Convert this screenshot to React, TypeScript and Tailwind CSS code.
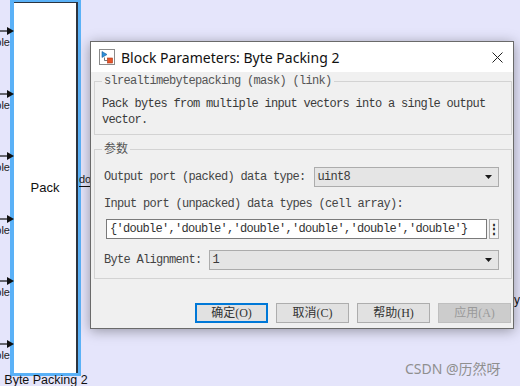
import React from 'react';

const mono = "font-['Liberation_Mono','Noto_Sans_CJK_SC',monospace] text-[12px] tracking-[-0.7px]";
const cjk = "font-['Liberation_Serif','Noto_Sans_CJK_SC',serif] text-[12px]";

const arrowRows = [31, 93.5, 156, 218.5, 281, 343.5];

function Dropdown({ value, className }: { value: string; className?: string }) {
  return (
    <div
      className={`flex h-[20px] items-center justify-between border border-[#acacac] bg-[#e5e5e5] pl-[3px] pr-[6px] ${className ?? ''}`}
    >
      <span className={`${mono} leading-[16px] text-[#3a3a3a]`}>{value}</span>
      <svg width="7" height="4" viewBox="0 0 7 4">
        <path d="M0 0h7L3.5 4z" fill="#1a1a1a" />
      </svg>
    </div>
  );
}

function DlgButton({
  label,
  primary,
  disabled,
}: {
  label: string;
  primary?: boolean;
  disabled?: boolean;
}) {
  return (
    <button
      className={`flex h-[20px] w-[73px] items-center justify-center ${cjk} ${
        primary
          ? 'border-2 border-[#0078d7] bg-[#e1e1e1] text-[#333]'
          : disabled
            ? 'border border-[#bfbfbf] bg-[#cccccc] text-[#9a9a9a]'
            : 'border border-[#adadad] bg-[#e1e1e1] text-[#333]'
      }`}
    >
      {label}
    </button>
  );
}

export default function App() {
  return (
    <div className="relative h-[386px] w-[520px] overflow-hidden bg-[#e5e5fb] font-['Liberation_Sans',sans-serif]">
      {/* Simulink block */}
      <div className="absolute left-[10px] top-0 h-[376px] w-[71px] bg-[#5ab1f7] pl-[4px] pr-[3px] pt-[2px] pb-[3px]">
        <div className="flex h-full items-center justify-center border-t border-r-2 border-[#2b3440] bg-white">
          <span className="text-[13px] text-[#111]">Pack</span>
        </div>
      </div>

      {arrowRows.map((y) => (
        <div key={y} className="absolute left-0" style={{ top: y - 5 }}>
          <svg width="14" height="10" viewBox="0 0 14 10">
            <path d="M0 5h8" stroke="#111" strokeWidth="1.2" />
            <path d="M7 1l7 4-7 4z" fill="#111" />
          </svg>
          <span className="absolute left-[-27px] top-[10px] w-[37px] text-right text-[11px] leading-[12px] text-[#222]">
            double
          </span>
        </div>
      ))}

      {/* output port */}
      <div className="absolute left-[79px] top-[172px] w-[14px] border-b border-[#111] text-[11px] leading-[14px] text-[#222]">
        do
      </div>
      <div className="absolute left-[514px] top-[293px] text-[12px] leading-[14px] text-[#111]">yt</div>

      <div className="absolute left-[0px] top-[372px] w-[92px] text-center text-[12.5px] leading-[16px] text-[#111]">
        Byte Packing 2
      </div>

      {/* Dialog */}
      <div className="absolute left-[90px] top-[41px] flex h-[288px] w-[424px] flex-col border border-[#6a6a6a] bg-[#f0f0f0] shadow-[0_2px_12px_rgba(0,0,0,0.35)]">
        <div className="flex h-[30px] items-center bg-white pl-[8px] pr-[10px]">
          <svg width="16" height="16" viewBox="0 0 16 16">
            <rect x="0.5" y="0.5" width="15" height="15" fill="#fff" stroke="#8a8a8a" />
            <path d="M3 2.5l5 3-5 3z" fill="#2d8fd8" stroke="#1a5f9a" strokeWidth="0.6" />
            <path d="M5.5 8.5v3h3" stroke="#555" fill="none" strokeWidth="0.8" />
            <rect x="8.5" y="9" width="5" height="5" fill="#e8542a" stroke="#a83212" strokeWidth="0.6" />
          </svg>
          <span className="ml-[6px] font-['Noto_Sans',sans-serif] text-[14px] text-[#111]">
            Block Parameters: Byte Packing 2
          </span>
          <svg className="ml-auto" width="11" height="11" viewBox="0 0 11 11">
            <path d="M0.5 0.5l10 10M10.5 0.5l-10 10" stroke="#222" strokeWidth="1" />
          </svg>
        </div>

        <div className="flex flex-1 flex-col pl-[3px] pr-[1px]">
          <fieldset className="mt-[1px] border border-[#d3d3d3] pl-[7px] pr-[6px] pt-[7px] pb-[6px]">
            <legend className={`${mono} px-[2px] leading-[16px] text-[#555]`}>
              slrealtimebytepacking (mask) (link)
            </legend>
            <p className={`${mono} leading-[16px] text-[#3a3a3a]`}>
              Pack bytes from multiple input vectors into a single output
              <br />
              vector.
            </p>
          </fieldset>

          <fieldset className="mt-[6px] border border-[#d3d3d3] pl-[7px] pr-[12px] pt-[10px] pb-[8px]">
            <legend className={`${cjk} px-[2px] leading-[16px] text-[#555]`}>参数</legend>
            <div className="ml-[2px] flex items-center">
              <span className={`${mono} leading-[16px] text-[#444]`}>Output port (packed) data type:</span>
              <Dropdown value="uint8" className="ml-[8px] flex-1" />
            </div>
            <div className={`${mono} ml-[2px] mt-[9px] leading-[16px] text-[#444]`}>
              Input port (unpacked) data types (cell array):
            </div>
            <div className="ml-[4px] mt-[7px] flex h-[20px] items-stretch">
              <div className="flex flex-1 items-center border border-[#7a7a7a] bg-white pl-[3px]">
                <span className={`${mono} leading-[16px] text-[#333]`}>
                  {"{'double','double','double','double','double','double'}"}
                </span>
              </div>
              <div className="ml-[2px] flex w-[10px] items-center justify-center border border-[#adadad] bg-[#f7f7f7] text-[12px] font-bold leading-none text-[#222]">
                ⋮
              </div>
            </div>
            <div className="ml-[2px] mt-[11px] flex items-center">
              <span className={`${mono} leading-[16px] text-[#444]`}>Byte Alignment:</span>
              <Dropdown value="1" className="ml-[7px] flex-1" />
            </div>
          </fieldset>

          <div className="mt-[24px] flex justify-end gap-[8px] pr-[1px]">
            <DlgButton label="确定(O)" primary />
            <DlgButton label="取消(C)" />
            <DlgButton label="帮助(H)" />
            <DlgButton label="应用(A)" disabled />
          </div>
        </div>
      </div>

      <div className="absolute left-[405px] top-[360px] font-['Noto_Sans','Noto_Sans_CJK_SC',sans-serif] text-[14px] leading-[18px] text-[#8f8f8f]">
        CSDN @历然呀
      </div>
    </div>
  );
}
